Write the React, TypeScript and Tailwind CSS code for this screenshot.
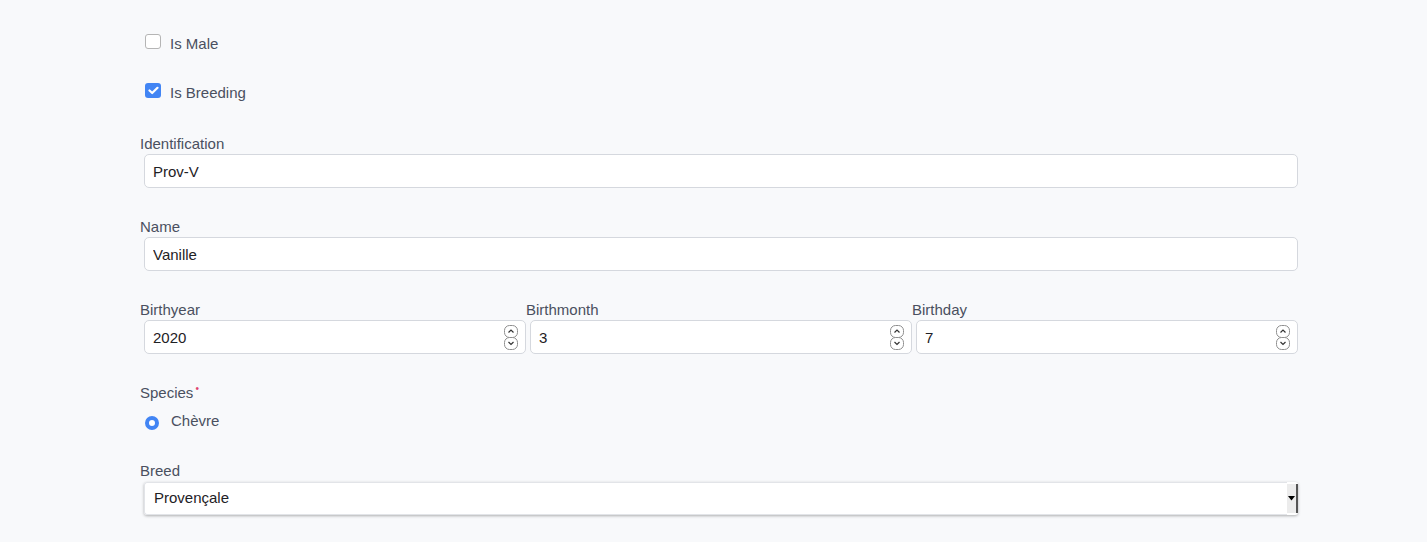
import { useState } from 'react';

function Spinner() {
  return (
    <div className="pointer-events-none absolute inset-y-0 right-[8px] flex flex-col justify-center">
      <svg width="14" height="13" viewBox="0 0 14 13" className="block">
        <rect x="0.5" y="0.5" width="13" height="12" rx="5" fill="#fff" stroke="#8f8f8f" />
        <path d="M4.5 7.5 L7 5 L9.5 7.5" fill="none" stroke="#333" strokeWidth="1.2" />
      </svg>
      <svg width="14" height="13" viewBox="0 0 14 13" className="-mt-px block">
        <rect x="0.5" y="0.5" width="13" height="12" rx="5" fill="#fff" stroke="#8f8f8f" />
        <path d="M4.5 5 L7 7.5 L9.5 5" fill="none" stroke="#333" strokeWidth="1.2" />
      </svg>
    </div>
  );
}

function Checkbox({ checked, onChange, label }: { checked: boolean; onChange: (v: boolean) => void; label: string }) {
  return (
    <label className="flex h-[18px] cursor-pointer items-center gap-[9px] pl-[5px]">
      <span
        onClick={() => onChange(!checked)}
        className={
          checked
            ? 'flex h-[15px] w-[16px] items-center justify-center rounded-[3px] bg-[#4285f4]'
            : 'h-[15px] w-[16px] rounded-[3px] border border-[#b5b5b5] bg-white'
        }
      >
        {checked && (
          <svg width="11" height="9" viewBox="0 0 11 9">
            <path d="M1.5 4.5 L4.2 7 L9.5 1.8" fill="none" stroke="#fff" strokeWidth="2.2" strokeLinecap="round" strokeLinejoin="round" />
          </svg>
        )}
      </span>
      <span className="pt-[6px] text-[15px] text-[#4a5060]">{label}</span>
    </label>
  );
}

export default function App() {
  const [isMale, setIsMale] = useState(false);
  const [isBreeding, setIsBreeding] = useState(true);
  const [identification, setIdentification] = useState('Prov-V');
  const [name, setName] = useState('Vanille');
  const [year, setYear] = useState('2020');
  const [month, setMonth] = useState('3');
  const [day, setDay] = useState('7');
  const [breed, setBreed] = useState('Provençale');

  const inputClass =
    'ml-[4px] block h-[34px] w-[calc(100%-4px)] rounded-[5px] border border-[#d5d8de] bg-white px-[8px] text-[15px] text-[#1e2125] outline-none [appearance:textfield] [&::-webkit-inner-spin-button]:appearance-none [&::-webkit-outer-spin-button]:appearance-none';
  const labelClass = 'block pt-[1px] text-[15px] leading-[18px] text-[#4a5060]';

  const numberFields = [
    { label: 'Birthyear', value: year, set: setYear },
    { label: 'Birthmonth', value: month, set: setMonth },
    { label: 'Birthday', value: day, set: setDay },
  ];

  return (
    <div className="min-h-screen bg-[#f8f9fb] font-['Liberation_Sans',Arial,sans-serif]">
      <div className="flex flex-col pb-[26px] pl-[140px] pr-[129px] pt-[32px]">
        <Checkbox checked={isMale} onChange={setIsMale} label="Is Male" />
        <div className="mt-[31px]">
          <Checkbox checked={isBreeding} onChange={setIsBreeding} label="Is Breeding" />
        </div>

        <div className="mt-[35px] flex flex-col gap-[1px]">
          <label className={labelClass}>Identification</label>
          <input className={inputClass} value={identification} onChange={(e) => setIdentification(e.target.value)} />
        </div>

        <div className="mt-[29px] flex flex-col gap-[1px]">
          <label className={labelClass}>Name</label>
          <input className={inputClass} value={name} onChange={(e) => setName(e.target.value)} />
        </div>

        <div className="mt-[29px] grid grid-cols-3">
          {numberFields.map((f) => (
            <div key={f.label} className="flex flex-col gap-[1px]">
              <label className={labelClass}>{f.label}</label>
              <div className="relative">
                <input type="number" className={inputClass} value={f.value} onChange={(e) => f.set(e.target.value)} />
                <Spinner />
              </div>
            </div>
          ))}
        </div>

        <div className="mt-[29px] flex flex-col gap-[11px]">
          <label className={labelClass}>
            Species<span className="ml-[2px] align-[6px] text-[10px] leading-none text-[#e0456e]">•</span>
          </label>
          <label className="flex h-[20px] items-center gap-[12px] pl-[5px]">
            <span className="h-[14px] w-[14px] rounded-full border-[4px] border-[#4285f4] bg-white" />
            <span className="pb-[4px] text-[15px] text-[#4a5060]">Chèvre</span>
          </label>
        </div>

        <div className="mt-[28px] flex flex-col gap-[2px]">
          <label className={labelClass}>Breed</label>
          <div className="relative ml-[4px] flex h-[33px] rounded-[3px] bg-white shadow-[0_1px_3px_rgba(0,0,0,0.3)]">
            <select
              value={breed}
              onChange={(e) => setBreed(e.target.value)}
              className="h-full flex-1 appearance-none rounded-l-[3px] border border-r-0 border-[#e2e4e8] bg-white pl-[9px] text-[15px] text-[#1e2125] outline-none"
            >
              <option>Provençale</option>
              <option>Alpine</option>
              <option>Saanen</option>
            </select>
            <div className="pointer-events-none my-[2px] flex w-[11px] items-center justify-center border-r-[2px] border-[#555] bg-[#ececec]">
              <svg width="7" height="5" viewBox="0 0 7 5">
                <path d="M0 0 H7 L3.5 4.5 Z" fill="#000" />
              </svg>
            </div>
          </div>
        </div>
      </div>
    </div>
  );
}
